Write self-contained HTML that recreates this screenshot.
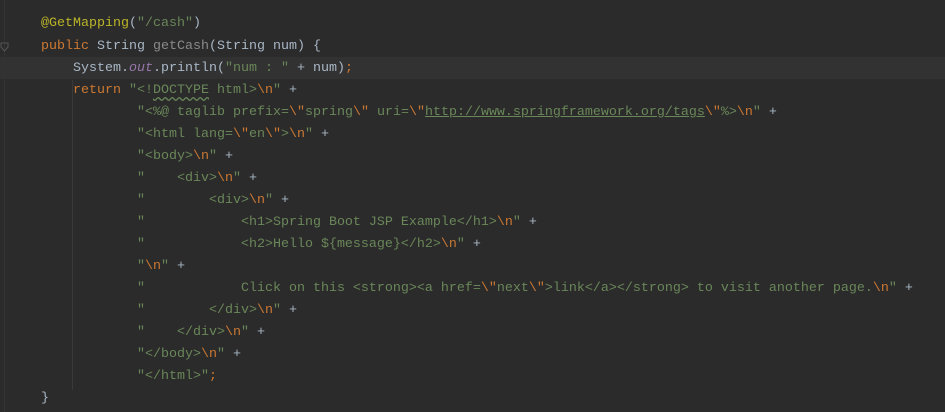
<!DOCTYPE html>
<html><head><style>
html,body{margin:0;padding:0;}
body{width:945px;height:412px;background:#2b2b2b;position:relative;overflow:hidden;font-family:"Liberation Mono",monospace;font-size:13.33px;color:#a9b7c6;}
.cur{position:absolute;left:0;top:57px;width:945px;height:22px;background:#323232;}
.l{position:absolute;left:41px;height:22px;line-height:22px;white-space:pre;}
.a{color:#bbb529}.k{color:#cc7832}.s{color:#6a8759}.e{color:#cc7832}.g{color:#8a8a8a}.o{color:#9876aa;font-style:italic}
.u{text-decoration:underline}
.w{text-decoration:underline wavy #6a8759;text-underline-offset:3px}
.guide{position:absolute;width:1px;background:#393939;}
</style></head><body>
<div class="cur"></div>
<div class="guide" style="left:72px;top:80px;height:310px"></div>
<div class="guide" style="left:4px;top:0;height:412px;background:#333"></div>
<svg style="position:absolute;left:0;top:42px" width="10" height="12"><path d="M1 1H8V5L4.5 9L1 5Z" fill="none" stroke="#555" stroke-width="1"/></svg>
<div class="l" style="top:13px"><span class="a">@GetMapping</span>(<span class="s">"/cash"</span>)</div>
<div class="l" style="top:36px"><span class="k">public </span>String <span class="g">getCash</span>(String num) {</div>
<div class="l" style="top:58px">    System.<span class="o">out</span>.println(<span class="s">"num : "</span> + num)<span class="k">;</span></div>
<div class="l" style="top:80px">    <span class="k">return </span><span class="s">"&lt;!<span class="w">DOCTYPE</span> html&gt;<span class="e">\n</span>"</span> +</div>
<div class="l" style="top:102px">            <span class="s">"&lt;%@ taglib prefix=<span class="e">\"</span>spring<span class="e">\"</span> uri=<span class="e">\"</span><span class="u">http://www.springframework.org/tags</span><span class="e">\"</span>%&gt;<span class="e">\n</span>"</span> +</div>
<div class="l" style="top:124px">            <span class="s">"&lt;html lang=<span class="e">\"</span>en<span class="e">\"</span>&gt;<span class="e">\n</span>"</span> +</div>
<div class="l" style="top:146px">            <span class="s">"&lt;body&gt;<span class="e">\n</span>"</span> +</div>
<div class="l" style="top:168px">            <span class="s">"    &lt;div&gt;<span class="e">\n</span>"</span> +</div>
<div class="l" style="top:190px">            <span class="s">"        &lt;div&gt;<span class="e">\n</span>"</span> +</div>
<div class="l" style="top:212px">            <span class="s">"            &lt;h1&gt;Spring Boot JSP Example&lt;/h1&gt;<span class="e">\n</span>"</span> +</div>
<div class="l" style="top:234px">            <span class="s">"            &lt;h2&gt;Hello ${message}&lt;/h2&gt;<span class="e">\n</span>"</span> +</div>
<div class="l" style="top:256px">            <span class="s">"<span class="e">\n</span>"</span> +</div>
<div class="l" style="top:278px">            <span class="s">"            Click on this &lt;strong&gt;&lt;a href=<span class="e">\"</span>next<span class="e">\"</span>&gt;link&lt;/a&gt;&lt;/strong&gt; to visit another page.<span class="e">\n</span>"</span> +</div>
<div class="l" style="top:300px">            <span class="s">"        &lt;/div&gt;<span class="e">\n</span>"</span> +</div>
<div class="l" style="top:322px">            <span class="s">"    &lt;/div&gt;<span class="e">\n</span>"</span> +</div>
<div class="l" style="top:344px">            <span class="s">"&lt;/body&gt;<span class="e">\n</span>"</span> +</div>
<div class="l" style="top:366px">            <span class="s">"&lt;/html&gt;"</span><span class="k">;</span></div>
<div class="l" style="top:388px">}</div>
</body></html>
